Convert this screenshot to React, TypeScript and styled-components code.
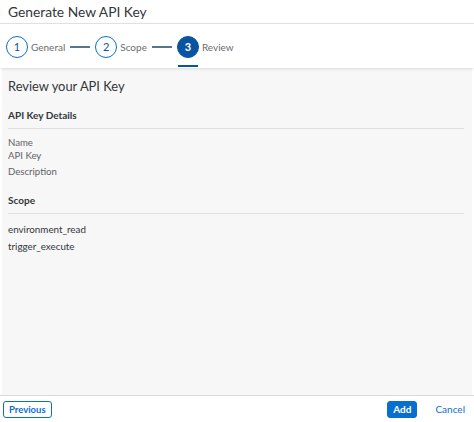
import React from 'react';
import styled, { createGlobalStyle } from 'styled-components';

const GlobalStyle = createGlobalStyle`
  html, body {
    margin: 0;
    padding: 0;
    background: #ffffff;
  }
  body {
    font-family: Lato, "Open Sans", sans-serif;
    color: #32363a;
  }
`;

const steps = [
  { n: 1, label: 'General' },
  { n: 2, label: 'Scope' },
  { n: 3, label: 'Review' },
];

const App = () => {
  const current = 3;
  return (
    <>
      <GlobalStyle />
      <Dialog>
        <Title>Generate New API Key</Title>
        <Stepper>
          {steps.map((step, i) => (
            <StepGroup key={step.n}>
              <Step>
                <Circle active={step.n === current}>{step.n}</Circle>
                <StepLabel>{step.label}</StepLabel>
                {step.n === current && <Underline />}
              </Step>
              {i < steps.length - 1 && <Connector />}
            </StepGroup>
          ))}
        </Stepper>
        <Content>
          <PageTitle>Review your API Key</PageTitle>
          <SectionTitle>API Key Details</SectionTitle>
          <Divider />
          <FieldLabel>Name</FieldLabel>
          <FieldValue>API Key</FieldValue>
          <FieldLabel spaced>Description</FieldLabel>
          <SectionTitle>Scope</SectionTitle>
          <Divider />
          <ScopeItem>environment_read</ScopeItem>
          <ScopeItem>trigger_execute</ScopeItem>
        </Content>
        <Footer>
          <GhostButton>Previous</GhostButton>
          <Actions>
            <PrimaryButton>Add</PrimaryButton>
            <TextButton>Cancel</TextButton>
          </Actions>
        </Footer>
      </Dialog>
    </>
  );
};

const Dialog = styled.div`
  width: 474px;
  height: 422px;
  display: flex;
  flex-direction: column;
  background: #ffffff;
  overflow: hidden;
`;

const Title = styled.div`
  height: 24px;
  box-sizing: border-box;
  padding: 3px 8px 0;
  font-size: 13.8px;
  line-height: 18px;
  color: #32363a;
  border-bottom: 1px solid #e5e5e5;
`;

const Stepper = styled.div`
  height: 44px;
  display: flex;
  align-items: center;
  padding-left: 6px;
  box-shadow: 0 1px 3px rgba(0, 0, 0, 0.12);
  position: relative;
  z-index: 1;
`;

const StepGroup = styled.div`
  display: flex;
  align-items: center;
`;

const Step = styled.div`
  position: relative;
  display: flex;
  align-items: center;
  height: 44px;
  padding-top: 1px;
  box-sizing: border-box;
`;

const Circle = styled.div<{ active?: boolean }>`
  width: 20px;
  height: 20px;
  border-radius: 50%;
  border: 1px solid ${(p) => (p.active ? '#0854a0' : '#0a6ed1')};
  background: ${(p) => (p.active ? '#0854a0' : '#ffffff')};
  color: ${(p) => (p.active ? '#ffffff' : '#0854a0')};
  font-size: 11px;
  font-weight: ${(p) => (p.active ? 700 : 400)};
  display: flex;
  align-items: center;
  justify-content: center;
`;

const StepLabel = styled.span`
  margin-left: 3px;
  font-size: 10px;
  color: #6a6d70;
`;

const Underline = styled.div`
  position: absolute;
  left: 1px;
  bottom: 1px;
  width: 20px;
  height: 2px;
  background: #0854a0;
`;

const Connector = styled.div`
  width: 20px;
  height: 2px;
  background: #5b738b;
  margin: 1px 5px 0 5px;
`;

const Content = styled.div`
  flex: 1;
  background: #f7f7f7;
  margin: 0 2px 0 2px;
  padding: 9px 8px 0 6px;
`;

const PageTitle = styled.div`
  font-size: 12.9px;
  line-height: 18px;
  color: #32363a;
  margin-bottom: 12px;
`;

const SectionTitle = styled.div`
  font-size: 10px;
  font-weight: 700;
  line-height: 16px;
  color: #32363a;
  margin-bottom: 5px;
`;

const Divider = styled.div`
  height: 1px;
  background: #e0e0e0;
  margin-bottom: 7px;
`;

const FieldLabel = styled.div<{ spaced?: boolean }>`
  font-size: 9.6px;
  line-height: 13px;
  color: #5f6266;
  margin-top: ${(p) => (p.spaced ? '3px' : '0')};
  margin-bottom: ${(p) => (p.spaced ? '14px' : '0')};
`;

const FieldValue = styled.div`
  font-size: 9.6px;
  line-height: 13px;
  color: #5f6266;
`;

const ScopeItem = styled.div`
  font-size: 9.8px;
  line-height: 17px;
  color: #32363a;
`;

const Footer = styled.div`
  height: 26px;
  border-top: 1px solid #d9d9d9;
  display: flex;
  align-items: center;
  justify-content: space-between;
  padding: 0 9px 0 3px;
`;

const Actions = styled.div`
  display: flex;
  align-items: center;
  gap: 18px;
`;

const ButtonBase = styled.button`
  font-family: Lato, "Open Sans", sans-serif;
  font-size: 10px;
  height: 17px;
  border-radius: 3px;
  cursor: pointer;
  display: flex;
  align-items: center;
`;

const GhostButton = styled(ButtonBase)`
  background: #ffffff;
  border: 1px solid #0a6ed1;
  color: #0a6ed1;
  font-weight: 700;
  font-size: 9.5px;
  padding: 0 5px;
`;

const PrimaryButton = styled(ButtonBase)`
  background: #0a6ed1;
  border: 1px solid #0a6ed1;
  color: #ffffff;
  font-weight: 700;
  padding: 0 5px;
`;

const TextButton = styled(ButtonBase)`
  background: transparent;
  border: none;
  color: #0a6ed1;
  padding: 0;
`;

export default App;
